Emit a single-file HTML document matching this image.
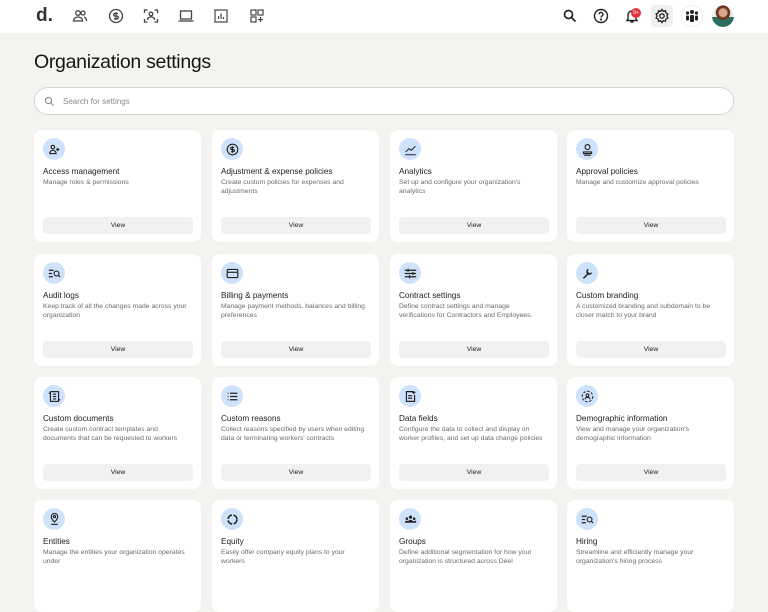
<!DOCTYPE html>
<html><head><meta charset="utf-8"><style>
*{box-sizing:border-box;margin:0;padding:0}
body{width:768px;height:565px;overflow:hidden;background:#f4f3ef;font-family:"Liberation Sans",sans-serif;color:#1d1d1d;position:relative}
.top{position:absolute;left:0;top:0;width:768px;height:33px;background:#fff}
.ic{position:absolute;top:8px}
h1{position:absolute;left:34px;top:51px;font-size:19.5px;font-weight:400;letter-spacing:-0.3px;color:#161616}
.search{position:absolute;left:34px;top:87px;width:700px;height:28px;border:1px solid #d4d3cf;border-radius:14px;background:#fff}
.search span{position:absolute;left:28px;top:9px;font-size:8px;color:#8a8a8a}
.card{position:absolute;width:167px;height:112px;background:#fff;border-radius:8px}
.circ{position:absolute;left:9px;top:8px;width:22px;height:22px;border-radius:50%;background:#cfe2fb;display:flex;align-items:center;justify-content:center}
.t{position:absolute;left:9px;top:37px;font-size:8.2px;color:#1d1d1d}
.d{position:absolute;left:9px;top:48px;width:148px;font-size:6.8px;line-height:9px;color:#6b6b6b}
.b{position:absolute;left:9px;top:87px;width:150px;height:17px;background:#f1f1f1;border-radius:4px;font-size:6.8px;text-align:center;line-height:17px;color:#222}
</style></head><body>
<div class="top">
<div style="position:absolute;left:36px;top:5px;font-size:19px;font-weight:700;color:#333">d.</div>
<svg class="ic" style="left:72px" width="16" height="16" viewBox="0 0 16 16" fill="none" stroke="#444" stroke-width="1.3"><circle cx="6" cy="5" r="2.3"/><path d="M1.5 13c0-2.5 2-4 4.5-4s4.5 1.5 4.5 4z"/><circle cx="11" cy="5" r="2"/><path d="M12 9c1.5.4 2.5 1.8 2.5 4"/></svg>
<svg class="ic" style="left:108px" width="16" height="16" viewBox="0 0 16 16" fill="none" stroke="#444" stroke-width="1.3"><circle cx="8" cy="8" r="6.5"/><path d="M10 5.5H7a1.3 1.3 0 000 2.6h2a1.3 1.3 0 010 2.6H6M8 4v8"/></svg>
<svg class="ic" style="left:143px" width="16" height="16" viewBox="0 0 16 16" fill="none" stroke="#444" stroke-width="1.3"><circle cx="8" cy="6" r="1.8"/><path d="M4.5 12c0-2 1.5-3 3.5-3s3.5 1 3.5 3M1.5 5V2h3M11.5 2h3v3M1.5 11v3h3M11.5 14h3v-3"/></svg>
<svg class="ic" style="left:178px" width="16" height="16" viewBox="0 0 16 16" fill="none" stroke="#444" stroke-width="1.3"><rect x="2.5" y="3" width="11" height="8"/><path d="M0.5 13h15"/></svg>
<svg class="ic" style="left:213px" width="16" height="16" viewBox="0 0 16 16" fill="none" stroke="#444" stroke-width="1.2"><rect x="2" y="2" width="12" height="12"/><path d="M5.5 11V8M8 11V5.5M10.5 11V9"/></svg>
<svg class="ic" style="left:249px" width="16" height="16" viewBox="0 0 16 16" fill="none" stroke="#444" stroke-width="1.2"><rect x="2" y="2" width="5" height="5"/><rect x="9" y="2" width="5" height="5"/><rect x="2" y="9" width="5" height="5"/><path d="M11.5 9v5M9 11.5h5"/></svg>
<svg class="ic" style="left:562px" width="16" height="16" viewBox="0 0 16 16" fill="none" stroke="#222" stroke-width="1.7"><circle cx="6.5" cy="6.5" r="4"/><path d="M9.5 9.5l4 4"/></svg>
<svg class="ic" style="left:593px" width="16" height="16" viewBox="0 0 16 16" fill="none" stroke="#222" stroke-width="1.4"><circle cx="8" cy="8" r="6.5"/><path d="M6 6.3a2 2 0 114 .2c0 1.3-2 1.5-2 3"/><circle cx="8" cy="11.5" r=".4"/></svg>
<svg class="ic" style="left:624px" width="16" height="16" viewBox="0 0 16 16" fill="none" stroke="#222" stroke-width="1.4"><path d="M4 11V7a4 4 0 018 0v4l1 1.5H3z M6.5 14h3"/></svg>
<div style="position:absolute;left:631px;top:8px;width:10px;height:10px;border-radius:50%;background:#e5333b;color:#fff;font-size:5px;text-align:center;line-height:10px">9+</div>
<div style="position:absolute;left:651px;top:5px;width:22px;height:22px;border-radius:5px;background:#efefef"></div>
<svg class="ic" style="left:654px" width="16" height="16" viewBox="0 0 16 16" fill="none" stroke="#222" stroke-width="1.3"><circle cx="8" cy="8" r="2.2"/><path d="M8 1.5l1.3 1.8 2.2-.5.4 2.2 2 1-1 2 1 2-2 1-.4 2.2-2.2-.5L8 14.5l-1.3-1.8-2.2.5-.4-2.2-2-1 1-2-1-2 2-1 .4-2.2 2.2.5z"/></svg>
<div style="position:absolute;left:681px;top:5px;width:22px;height:22px;border-radius:50%;border:1px solid #eee"></div>
<svg class="ic" style="left:684px" width="16" height="16" viewBox="0 0 16 16" fill="#222"><circle cx="8" cy="4" r="2"/><circle cx="3.5" cy="5" r="1.6"/><circle cx="12.5" cy="5" r="1.6"/><rect x="6" y="7" width="4" height="7" rx="1"/><rect x="2" y="7.5" width="3" height="5" rx="1"/><rect x="11" y="7.5" width="3" height="5" rx="1"/></svg>
<div style="position:absolute;left:712px;top:5px;width:22px;height:22px;border-radius:50%;background:radial-gradient(circle at 50% 35%,#d9a58a 0 4px,#6a3522 5px 7px,transparent 7.5px),linear-gradient(#eee 55%,#2e6e62 55%)"></div>
</div>
<h1>Organization settings</h1>
<div class="search"><svg style="position:absolute;left:9px;top:8px" width="11" height="11" viewBox="0 0 16 16" fill="none" stroke="#888" stroke-width="1.5"><circle cx="6.5" cy="6.5" r="4.5"/><path d="M10 10l4 4"/></svg><span>Search for settings</span></div>

<div class="card" style="left:34px;top:130px"><div class="circ"><svg width="13" height="13" viewBox="0 0 16 16" fill="none" stroke="#222" stroke-width="1.4"><circle cx="6" cy="5" r="2.2"/><path d="M2 13c0-2.5 2-4 4-4s4 1.5 4 4z M12 6v4M10 8h4"/></svg></div><div class="t">Access management</div><div class="d">Manage roles &amp; permissions</div><div class="b">View</div></div>
<div class="card" style="left:212px;top:130px"><div class="circ"><svg width="13" height="13" viewBox="0 0 16 16" fill="none" stroke="#222" stroke-width="1.4"><circle cx="8" cy="8" r="6.5"/><path d="M10 5.5H7a1.3 1.3 0 000 2.6h2a1.3 1.3 0 010 2.6H6M8 4v8"/></svg></div><div class="t">Adjustment &amp; expense policies</div><div class="d">Create custom policies for expenses and adjustments</div><div class="b">View</div></div>
<div class="card" style="left:390px;top:130px"><div class="circ"><svg width="13" height="13" viewBox="0 0 16 16" fill="none" stroke="#222" stroke-width="1.3"><path d="M1.5 14.5h13M2 11l4-4 3 2 5-5"/></svg></div><div class="t">Analytics</div><div class="d">Set up and configure your organization's analytics</div><div class="b">View</div></div>
<div class="card" style="left:567px;top:130px"><div class="circ"><svg width="13" height="13" viewBox="0 0 16 16" fill="none" stroke="#222" stroke-width="1.4"><circle cx="8" cy="5" r="3"/><path d="M3 11h10v2H3zM4 15h8"/></svg></div><div class="t">Approval policies</div><div class="d">Manage and customize approval policies</div><div class="b">View</div></div>

<div class="card" style="left:34px;top:254px"><div class="circ"><svg width="13" height="13" viewBox="0 0 16 16" fill="none" stroke="#222" stroke-width="1.4"><path d="M1 4h6M1 8h4M1 12h5"/><circle cx="10.5" cy="8" r="3"/><path d="M12.5 10l2.5 2.5"/></svg></div><div class="t">Audit logs</div><div class="d">Keep track of all the changes made across your organization</div><div class="b">View</div></div>
<div class="card" style="left:212px;top:254px"><div class="circ"><svg width="13" height="13" viewBox="0 0 16 16" fill="none" stroke="#222" stroke-width="1.4"><rect x="1.5" y="3" width="13" height="10" rx="1"/><path d="M1.5 6.5h13"/></svg></div><div class="t">Billing &amp; payments</div><div class="d">Manage payment methods, balances and billing preferences</div><div class="b">View</div></div>
<div class="card" style="left:390px;top:254px"><div class="circ"><svg width="13" height="13" viewBox="0 0 16 16" fill="none" stroke="#222" stroke-width="1.4"><path d="M1 4h14M1 8h14M1 12h14M5 2v4M11 6v4M7 10v4"/></svg></div><div class="t">Contract settings</div><div class="d">Define contract settings and manage verifications for Contractors and Employees.</div><div class="b">View</div></div>
<div class="card" style="left:567px;top:254px"><div class="circ"><svg width="13" height="13" viewBox="0 0 16 16" fill="none" stroke="#222" stroke-width="1.8"><path d="M3 14l7-7M9 3a3 3 0 104 4"/></svg></div><div class="t">Custom branding</div><div class="d">A customized branding and subdomain to be closer match to your brand</div><div class="b">View</div></div>

<div class="card" style="left:34px;top:377px"><div class="circ"><svg width="13" height="13" viewBox="0 0 16 16" fill="none" stroke="#222" stroke-width="1.4"><rect x="3" y="2" width="10" height="12"/><path d="M6 5h4M6 8h4M6 11h4M1 4h2M13 12h2"/></svg></div><div class="t">Custom documents</div><div class="d">Create custom contract templates and documents that can be requested to workers</div><div class="b">View</div></div>
<div class="card" style="left:212px;top:377px"><div class="circ"><svg width="13" height="13" viewBox="0 0 16 16" fill="none" stroke="#222" stroke-width="1.4"><path d="M2 4h1M2 8h1M2 12h1M5 4h9M5 8h9M5 12h9"/></svg></div><div class="t">Custom reasons</div><div class="d">Collect reasons specified by users when editing data or terminating workers' contracts</div><div class="b">View</div></div>
<div class="card" style="left:390px;top:377px"><div class="circ"><svg width="13" height="13" viewBox="0 0 16 16" fill="none" stroke="#222" stroke-width="1.4"><path d="M11 2H3v12h10V6M5 7h5M5 10h5M12 1v4M10 3h4"/></svg></div><div class="t">Data fields</div><div class="d">Configure the data to collect and display on worker profiles, and set up data change policies</div><div class="b">View</div></div>
<div class="card" style="left:567px;top:377px"><div class="circ"><svg width="13" height="13" viewBox="0 0 16 16" fill="none" stroke="#222" stroke-width="1.3"><circle cx="8" cy="8" r="6.5" stroke-dasharray="3 2"/><circle cx="8" cy="6.5" r="1.7"/><path d="M5 11.5c0-1.7 1.3-2.5 3-2.5s3 .8 3 2.5"/></svg></div><div class="t">Demographic information</div><div class="d">View and manage your organization's demographic information</div><div class="b">View</div></div>

<div class="card" style="left:34px;top:500px"><div class="circ"><svg width="13" height="13" viewBox="0 0 16 16" fill="none" stroke="#222" stroke-width="1.4"><path d="M8 11s4-3.5 4-6.5a4 4 0 00-8 0C4 7.5 8 11 8 11z"/><circle cx="8" cy="4.5" r="1.3"/><path d="M4 14h8"/></svg></div><div class="t">Entities</div><div class="d">Manage the entities your organization operates under</div></div>
<div class="card" style="left:212px;top:500px"><div class="circ"><svg width="13" height="13" viewBox="0 0 16 16" fill="none" stroke="#222" stroke-width="2"><circle cx="8" cy="8" r="5.5" stroke-dasharray="7 2"/></svg></div><div class="t">Equity</div><div class="d">Easily offer company equity plans to your workers</div></div>
<div class="card" style="left:390px;top:500px"><div class="circ"><svg width="13" height="13" viewBox="0 0 16 16" fill="#222"><circle cx="8" cy="5" r="2"/><circle cx="3.5" cy="7" r="1.6"/><circle cx="12.5" cy="7" r="1.6"/><path d="M4.5 12c0-2 1.5-3.5 3.5-3.5s3.5 1.5 3.5 3.5zM1 12c0-1.5.8-2.5 2.5-2.5S5 10 5 12zM11 12c0-1.5.8-2.5 2.5-2.5S15 10 15 12z"/></svg></div><div class="t">Groups</div><div class="d">Define additional segmentation for how your organization is structured across Deel</div></div>
<div class="card" style="left:567px;top:500px"><div class="circ"><svg width="13" height="13" viewBox="0 0 16 16" fill="none" stroke="#222" stroke-width="1.4"><path d="M1 4h6M1 8h4M1 12h5"/><circle cx="10.5" cy="8" r="3"/><path d="M12.5 10l2.5 2.5"/></svg></div><div class="t">Hiring</div><div class="d">Streamline and efficiently manage your organization's hiring process</div></div>
</body></html>
